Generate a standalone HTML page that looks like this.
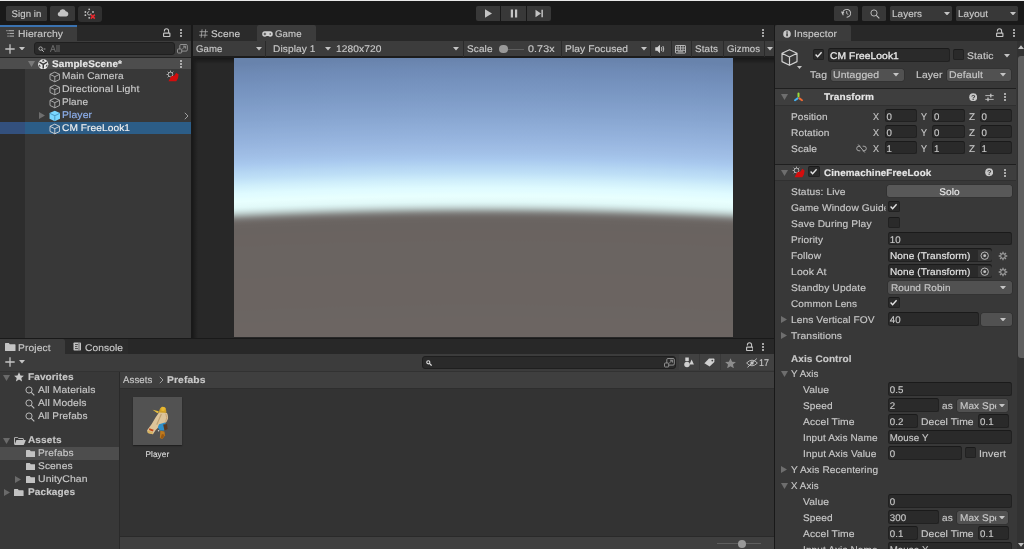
<!DOCTYPE html>
<html><head><meta charset="utf-8"><title>Unity</title>
<style>
html,body{margin:0;padding:0;background:#191919;}
body{width:1024px;height:549px;position:relative;overflow:hidden;font-family:"Liberation Sans",sans-serif;font-size:10px;color:#c8c8c8;}
.r{position:absolute;display:block;}
.t{position:absolute;display:block;height:14px;line-height:14px;white-space:nowrap;font-size:9.7px;letter-spacing:0.1px;color:#c8c8c8;text-rendering:geometricPrecision;-webkit-text-stroke:0.15px currentColor;}
.b{font-weight:bold;}
.w{color:#e6e6e6;}
.btn{border-radius:1.5px;}
#root{position:absolute;left:0;top:0;width:1024px;height:549px;will-change:transform;}
</style></head><body><div id="root">

<div class="r " style="left:0px;top:0px;width:1024px;height:1px;background:#e9e9e9;"></div>
<div class="r " style="left:0px;top:1px;width:1024px;height:24px;background:#191919;"></div>
<div class="r btn" style="left:6px;top:6px;width:41px;height:14.5px;background:#383838;"></div>
<span id="t1" class="t " style="left:6px;width:41px;text-align:center;transform:scaleX(0.9926);transform-origin:50% 50%;top:7.9px;">Sign in</span>
<div class="r btn" style="left:50.2px;top:6px;width:24.6px;height:14.5px;background:#383838;"></div>
<svg class="r" style="left:56.5px;top:9px;" width="12" height="8" viewBox="0 0 12 8"><path d="M2.8 7.6A2.4 2.4 0 0 1 2.5 2.9A3.3 3.3 0 0 1 8.8 2.3A2.7 2.7 0 0 1 9.4 7.6Z" fill="#c4c4c4"/></svg>
<div class="r " style="left:78px;top:6px;width:24px;height:16px;background:#303030;border-radius:3px;"></div>
<svg class="r" style="left:84px;top:8px;" width="13" height="12" viewBox="0 0 13 12"><g fill="#c4c4c4"><circle cx="5.2" cy="1.3" r="0.9"/><circle cx="1.4" cy="4" r="0.9"/><circle cx="9" cy="4" r="0.9"/><circle cx="1.4" cy="7.2" r="0.9"/><circle cx="5.2" cy="9.8" r="0.9"/></g><path d="M5.2 3.6A1.7 1.7 0 1 0 6.9 5.4" fill="none" stroke="#c4c4c4" stroke-width="0.9"/><path d="M6.8 6.6L10.8 10.6M10.8 6.6L6.8 10.6" stroke="#e8292f" stroke-width="1.5"/></svg>
<div class="r " style="left:475.5px;top:6px;width:24.5px;height:14.5px;background:#383838;border-radius:2px 0 0 2px;"></div>
<div class="r " style="left:501px;top:6px;width:24.5px;height:14.5px;background:#383838;border-radius:0;"></div>
<div class="r " style="left:526.5px;top:6px;width:24.5px;height:14.5px;background:#383838;border-radius:0 2px 2px 0;"></div>
<svg class="r" style="left:483.5px;top:9px;" width="9" height="9" viewBox="0 0 9 9"><path d="M1 0.3V8.7L8 4.5Z" fill="#c4c4c4"/></svg>
<svg class="r" style="left:509.5px;top:9px;" width="8" height="9" viewBox="0 0 8 9"><path d="M0.8 0.5H3V8.5H0.8ZM5 0.5H7.2V8.5H5Z" fill="#c4c4c4"/></svg>
<svg class="r" style="left:534.5px;top:9px;" width="9" height="9" viewBox="0 0 9 9"><path d="M0.5 0.8V8.2L6 4.5ZM6.4 0.8H7.9V8.2H6.4Z" fill="#c4c4c4"/></svg>
<div class="r btn" style="left:834px;top:6px;width:24px;height:14.5px;background:#383838;"></div>
<svg class="r" style="left:840.5px;top:8px;" width="11" height="11" viewBox="0 0 11 11"><circle cx="5.7" cy="5.3" r="3.9" fill="none" stroke="#c4c4c4" stroke-width="1" stroke-dasharray="20 4.5" transform="rotate(150 5.7 5.3)"/><path d="M5.7 3V5.5L7.3 6.5" fill="none" stroke="#c4c4c4" stroke-width="0.9"/><path d="M0 3.6L3.4 4L1.4 6.8Z" fill="#c4c4c4"/></svg>
<div class="r btn" style="left:862px;top:6px;width:24px;height:14.5px;background:#383838;"></div>
<svg class="r" style="left:869.5px;top:8.5px;" width="10" height="10" viewBox="0 0 10 10"><circle cx="4" cy="4" r="3.1" fill="none" stroke="#c4c4c4" stroke-width="0.9"/><path d="M6.3 6.3L9.3 9.3" stroke="#c4c4c4" stroke-width="1.1"/></svg>
<div class="r btn" style="left:889.7px;top:6px;width:62.3px;height:14.5px;background:#383838;"></div>
<span id="t2" class="t " style="left:891.5px;transform:scaleX(1.0143);transform-origin:0 50%;top:7.9px;">Layers</span>
<svg class="r" style="left:943.7px;top:11.55px;" width="6" height="3.5" viewBox="0 0 6 3.5"><path d="M0 0H6L3.0 3.5Z" fill="#c4c4c4"/></svg>
<div class="r btn" style="left:955.7px;top:6px;width:62.3px;height:14.5px;background:#383838;"></div>
<span id="t3" class="t " style="left:958.2px;transform:scaleX(1.0137);transform-origin:0 50%;top:7.9px;">Layout</span>
<svg class="r" style="left:1009.7px;top:11.55px;" width="6" height="3.5" viewBox="0 0 6 3.5"><path d="M0 0H6L3.0 3.5Z" fill="#c4c4c4"/></svg>
<div class="r " style="left:0px;top:25px;width:191px;height:16px;background:#282828;"></div>
<div class="r " style="left:0px;top:25px;width:77px;height:16px;background:#3c3c3c;"></div>
<div class="r " style="left:0px;top:24.8px;width:77px;height:2.1px;background:#3a72b0;"></div>
<svg class="r" style="left:6px;top:29.5px;" width="9" height="7" viewBox="0 0 9 7"><g fill="#b4b4b4"><rect x="0.3" y="0.2" width="1.3" height="1"/><rect x="2.4" y="0.2" width="5.6" height="1"/><rect x="1.4" y="2.9" width="1.3" height="1"/><rect x="3.4" y="2.9" width="4.6" height="1"/><rect x="1.4" y="5.6" width="1.3" height="1"/><rect x="3.4" y="5.6" width="4.6" height="1"/></g></svg>
<span id="t4" class="t " style="left:17.7px;transform:scaleX(1.0650);transform-origin:0 50%;top:28.1px;">Hierarchy</span>
<svg class="r" style="left:163px;top:27.8px;" width="7.6" height="9.4" viewBox="0 0 7.6 9.4"><path d="M1.4 3.4V2.9A2.1 2.1 0 0 1 5.6 2.9V5" fill="none" stroke="#c4c4c4" stroke-width="1.1"/><rect x="0.6" y="5.1" width="6.3" height="3.5" rx="0.5" fill="none" stroke="#c4c4c4" stroke-width="1.15"/></svg>
<svg class="r" style="left:179.5px;top:28px;" width="2" height="10" viewBox="0 0 2 10"><rect x="0.1" y="1.1" width="1.8" height="1.8" fill="#c4c4c4"/><rect x="0.1" y="4.1" width="1.8" height="1.8" fill="#c4c4c4"/><rect x="0.1" y="7.1" width="1.8" height="1.8" fill="#c4c4c4"/></svg>
<div class="r " style="left:0px;top:41px;width:191px;height:16px;background:#3c3c3c;"></div>
<div class="r " style="left:0px;top:56.5px;width:191px;height:1px;background:#232323;"></div>
<svg class="r" style="left:5px;top:43.5px;" width="10" height="10" viewBox="0 0 10 10"><path d="M5 0.3V9.7M0.3 5H9.7" stroke="#c4c4c4" stroke-width="1.3"/></svg>
<svg class="r" style="left:18.5px;top:46.85px;" width="6" height="3.5" viewBox="0 0 6 3.5"><path d="M0 0H6L3.0 3.5Z" fill="#c4c4c4"/></svg>
<div class="r " style="left:34.3px;top:42.2px;width:141.2px;height:12.6px;background:#2a2a2a;border:1px solid #1f1f1f;border-radius:3px;box-sizing:border-box;"></div>
<svg class="r" style="left:38px;top:45.5px;" width="8" height="7" viewBox="0 0 8 7"><circle cx="2.6" cy="2.6" r="1.7" fill="none" stroke="#bdbdbd" stroke-width="0.9"/><path d="M3.8 3.8L5.8 5.8" stroke="#bdbdbd" stroke-width="1"/><path d="M5.6 3H7.4" stroke="#bdbdbd" stroke-width="0.8"/></svg>
<span id="t5" class="t " style="left:49.5px;transform:scaleX(0.9107);transform-origin:0 50%;top:43.4px;color:#6e6e6e;">All</span>
<svg class="r" style="left:176.5px;top:43.5px;" width="11" height="10" viewBox="0 0 11 10"><rect x="2.8" y="0.5" width="7.5" height="6.6" rx="1.2" fill="none" stroke="#9a9a9a" stroke-width="0.9"/><rect x="0.5" y="5" width="4.2" height="4" rx="0.8" fill="#3c3c3c" stroke="#9a9a9a" stroke-width="0.9"/><path d="M5.3 5L8.3 2.3M6 2.2H8.4V4.6" fill="none" stroke="#9a9a9a" stroke-width="0.9"/></svg>
<div class="r " style="left:0px;top:57.5px;width:191px;height:280.5px;background:#383838;"></div>
<div class="r " style="left:0px;top:57.5px;width:25.2px;height:280.5px;background:#2d2d2d;"></div>
<div class="r " style="left:0px;top:57.5px;width:191px;height:11.7px;background:#4d4d4d;"></div>
<svg class="r" style="left:28px;top:60.5px;" width="7" height="6" viewBox="0 0 7 6"><path d="M0 0H7L3.5 6Z" fill="#7a7a7a"/></svg>
<svg class="r" style="left:38px;top:58.5px;" width="10.5" height="10.5" viewBox="0 0 10.5 10.5"><circle cx="5.25" cy="5.25" r="5.1" fill="#e8e8e8"/><path d="M5.25 5.4V9.6M5.25 5.4L1.5 3.2M5.25 5.4L9 3.2" stroke="#3a3a3a" stroke-width="1.5" fill="none"/><path d="M5.25 0.6L6.8 2.6H3.7ZM0.9 7.6L1.4 5.2L3 7.6ZM9.6 7.6L9.1 5.2L7.5 7.6Z" fill="#3a3a3a"/></svg>
<span id="t6" class="t b w" style="left:51.7px;transform:scaleX(1.0312);transform-origin:0 50%;top:57.7px;">SampleScene*</span>
<svg class="r" style="left:179.5px;top:58.5px;" width="2" height="10" viewBox="0 0 2 10"><rect x="0.1" y="1.1" width="1.8" height="1.8" fill="#c4c4c4"/><rect x="0.1" y="4.1" width="1.8" height="1.8" fill="#c4c4c4"/><rect x="0.1" y="7.1" width="1.8" height="1.8" fill="#c4c4c4"/></svg>
<div class="r " style="left:0px;top:121.5px;width:191px;height:12.8px;background:#2c5d87;"></div>
<div class="r " style="left:0px;top:121.5px;width:25.2px;height:12.8px;background:#33507d;"></div>
<svg class="r" style="left:48.5px;top:70.8px;" width="11.6" height="11.8" viewBox="-0.2 -0.3 10.4 10.6"><path d="M5 0.7L9.3 2.7V7.3L5 9.4L0.7 7.3V2.7Z M0.7 2.7L5 4.8L9.3 2.7 M5 4.8V9.4" fill="none" stroke="#b4b4b4" stroke-width="0.8" stroke-linejoin="round"/></svg>
<span id="t7" class="t " style="left:62.0px;transform:scaleX(1.0396);transform-origin:0 50%;top:70.0px;color:#c8c8c8;">Main Camera</span>
<svg class="r" style="left:48.5px;top:83.8px;" width="11.6" height="11.8" viewBox="-0.2 -0.3 10.4 10.6"><path d="M5 0.7L9.3 2.7V7.3L5 9.4L0.7 7.3V2.7Z M0.7 2.7L5 4.8L9.3 2.7 M5 4.8V9.4" fill="none" stroke="#b4b4b4" stroke-width="0.8" stroke-linejoin="round"/></svg>
<span id="t8" class="t " style="left:62.0px;transform:scaleX(1.0905);transform-origin:0 50%;top:83.0px;color:#c8c8c8;">Directional Light</span>
<svg class="r" style="left:48.5px;top:96.8px;" width="11.6" height="11.8" viewBox="-0.2 -0.3 10.4 10.6"><path d="M5 0.7L9.3 2.7V7.3L5 9.4L0.7 7.3V2.7Z M0.7 2.7L5 4.8L9.3 2.7 M5 4.8V9.4" fill="none" stroke="#b4b4b4" stroke-width="0.8" stroke-linejoin="round"/></svg>
<span id="t9" class="t " style="left:62.0px;transform:scaleX(1.0325);transform-origin:0 50%;top:96.0px;color:#c8c8c8;">Plane</span>
<svg class="r" style="left:48.5px;top:109.8px;" width="11.6" height="11.8" viewBox="-0.2 -0.3 10.4 10.6"><path d="M5 0.3L9.7 2.5V7.5L5 9.8L0.3 7.5V2.5Z" fill="#7ad8ff"/><path d="M0.6 2.7L5 4.9L9.4 2.7M5 4.9V9.6" fill="none" stroke="#4a9bc6" stroke-width="0.9"/></svg>
<span id="t10" class="t " style="left:62.0px;transform:scaleX(1.0726);transform-origin:0 50%;top:109.0px;color:#8fb2f0;">Player</span>
<svg class="r" style="left:48.5px;top:122.8px;" width="11.6" height="11.8" viewBox="-0.2 -0.3 10.4 10.6"><path d="M5 0.7L9.3 2.7V7.3L5 9.4L0.7 7.3V2.7Z M0.7 2.7L5 4.8L9.3 2.7 M5 4.8V9.4" fill="none" stroke="#dcdcdc" stroke-width="0.8" stroke-linejoin="round"/></svg>
<span id="t11" class="t " style="left:62.0px;transform:scaleX(1.0433);transform-origin:0 50%;top:122.0px;color:#eeeeee;">CM FreeLook1</span>
<svg class="r" style="left:39.1px;top:111.9px;" width="6" height="7" viewBox="0 0 6 7"><path d="M0 0V7L6 3.5Z" fill="#6e6e6e"/></svg>
<svg class="r" style="left:166px;top:70px;" width="13" height="12" viewBox="0 0 13 12"><g fill="none" stroke="#b8b8b8" stroke-width="0.9"><circle cx="4.5" cy="4.5" r="2.3"/><path d="M4.5 0.6V2.2M0.6 4.5H2.2M1.7 1.7L2.9 2.9M7.3 1.7L6.1 2.9M1.7 7.3L2.9 6.1"/></g><path d="M2.5 11.3L5.2 6.3L8.5 5.6L10.2 2.8L12.6 4.6L12 8.2L10.3 11.3Z" fill="#d40d0d"/></svg>
<svg class="r" style="left:184px;top:111.5px;" width="5" height="8" viewBox="0 0 5 8"><path d="M0.8 0.8L4 4L0.8 7.2" fill="none" stroke="#a0a0a0" stroke-width="1"/></svg>
<div class="r " style="left:193px;top:25px;width:581px;height:16px;background:#282828;"></div>
<div class="r " style="left:193px;top:25px;width:64px;height:16px;background:#2b2b2b;"></div>
<svg class="r" style="left:199px;top:29px;" width="9" height="9" viewBox="0 0 9 9"><path d="M2.6 0.3V8.7M6.2 0.3V8.7M0.3 2.7H8.7M0.3 6.2H8.7" stroke="#b0b0b0" stroke-width="0.75" transform="skewX(-6) translate(0.5 0)"/></svg>
<span id="t12" class="t " style="left:211.3px;transform:scaleX(1.0406);transform-origin:0 50%;top:28.1px;">Scene</span>
<div class="r " style="left:257px;top:25px;width:59px;height:16px;background:#3c3c3c;border-radius:2px 2px 0 0;"></div>
<svg class="r" style="left:261.5px;top:30.5px;" width="11" height="6" viewBox="0 0 11 6"><path d="M2.9 0.3H8.1A2.7 2.7 0 0 1 8.1 5.7A2.6 2.6 0 0 1 6.3 4.9H4.7A2.6 2.6 0 0 1 2.9 5.7A2.7 2.7 0 0 1 2.9 0.3Z" fill="#d0d0d0"/><path d="M1.6 3H4.2M2.9 1.7V4.3" stroke="#333" stroke-width="0.8"/><circle cx="8.2" cy="3" r="0.8" fill="#333"/></svg>
<span id="t13" class="t " style="left:274.5px;transform:scaleX(0.9928);transform-origin:0 50%;top:28.1px;">Game</span>
<svg class="r" style="left:762px;top:28px;" width="2" height="10" viewBox="0 0 2 10"><rect x="0.1" y="1.1" width="1.8" height="1.8" fill="#c4c4c4"/><rect x="0.1" y="4.1" width="1.8" height="1.8" fill="#c4c4c4"/><rect x="0.1" y="7.1" width="1.8" height="1.8" fill="#c4c4c4"/></svg>
<div class="r " style="left:193px;top:40.5px;width:581px;height:15.7px;background:#3c3c3c;"></div>
<div class="r " style="left:193px;top:56.2px;width:581px;height:1.4px;background:#1c1c1c;"></div>
<span id="t14" class="t " style="left:195.7px;transform:scaleX(0.9854);transform-origin:0 50%;top:43.3px;">Game</span>
<svg class="r" style="left:255.5px;top:47.05px;" width="6" height="3.5" viewBox="0 0 6 3.5"><path d="M0 0H6L3.0 3.5Z" fill="#c4c4c4"/></svg>
<div class="r " style="left:265px;top:41px;width:1px;height:16px;background:#2a2a2a;"></div>
<span id="t15" class="t " style="left:272.5px;transform:scaleX(1.0457);transform-origin:0 50%;top:43.3px;">Display 1</span>
<svg class="r" style="left:324.5px;top:47.05px;" width="6" height="3.5" viewBox="0 0 6 3.5"><path d="M0 0H6L3.0 3.5Z" fill="#c4c4c4"/></svg>
<span id="t16" class="t " style="left:336.0px;transform:scaleX(1.0517);transform-origin:0 50%;top:43.3px;">1280x720</span>
<svg class="r" style="left:452.5px;top:47.05px;" width="6" height="3.5" viewBox="0 0 6 3.5"><path d="M0 0H6L3.0 3.5Z" fill="#c4c4c4"/></svg>
<div class="r " style="left:462.5px;top:41px;width:1px;height:16px;background:#2a2a2a;"></div>
<span id="t17" class="t " style="left:467.0px;transform:scaleX(1.0352);transform-origin:0 50%;top:43.3px;">Scale</span>
<div class="r " style="left:503px;top:48.5px;width:20.5px;height:1px;background:#5e5e5e;"></div>
<div class="r " style="left:499.3px;top:44.6px;width:8.4px;height:8.4px;background:#999999;border-radius:50%;"></div>
<span id="t18" class="t " style="left:528.0px;transform:scaleX(1.0994);transform-origin:0 50%;top:43.3px;">0.73x</span>
<div class="r " style="left:561px;top:41px;width:1px;height:16px;background:#2a2a2a;"></div>
<span id="t19" class="t " style="left:564.5px;transform:scaleX(1.0535);transform-origin:0 50%;top:43.3px;">Play Focused</span>
<svg class="r" style="left:640.5px;top:47.05px;" width="6" height="3.5" viewBox="0 0 6 3.5"><path d="M0 0H6L3.0 3.5Z" fill="#c4c4c4"/></svg>
<div class="r " style="left:649.5px;top:41px;width:1px;height:16px;background:#2a2a2a;"></div>
<svg class="r" style="left:654.5px;top:44px;" width="11" height="10" viewBox="0 0 11 10"><path d="M0.3 3.3H2.3L5 0.8V9.2L2.3 6.7H0.3Z" fill="#d0d0d0"/><path d="M6.4 3.2Q7.4 5 6.4 6.8M7.9 2Q9.6 5 7.9 8" fill="none" stroke="#d0d0d0" stroke-width="0.9"/></svg>
<div class="r " style="left:670.5px;top:41px;width:1px;height:16px;background:#2a2a2a;"></div>
<svg class="r" style="left:675px;top:44.5px;" width="11" height="9" viewBox="0 0 11 9"><rect x="0.5" y="0.5" width="10" height="7.6" rx="0.6" fill="none" stroke="#c4c4c4" stroke-width="0.9"/><path d="M1 3H10M1 5.4H10M3 0.8V5.4M5.5 0.8V5.4M8 0.8V5.4" stroke="#c4c4c4" stroke-width="0.8" fill="none"/><path d="M2.8 6.8H8.2" stroke="#c4c4c4" stroke-width="0.9"/></svg>
<div class="r " style="left:690.5px;top:41px;width:1px;height:16px;background:#2a2a2a;"></div>
<span id="t20" class="t " style="left:695.0px;transform:scaleX(1.0232);transform-origin:0 50%;top:43.3px;">Stats</span>
<div class="r " style="left:723px;top:41px;width:1px;height:16px;background:#2a2a2a;"></div>
<span id="t21" class="t " style="left:726.5px;transform:scaleX(0.9897);transform-origin:0 50%;top:43.3px;">Gizmos</span>
<div class="r " style="left:763.5px;top:41px;width:1px;height:16px;background:#2a2a2a;"></div>
<svg class="r" style="left:767px;top:47.05px;" width="6" height="3.5" viewBox="0 0 6 3.5"><path d="M0 0H6L3.0 3.5Z" fill="#c4c4c4"/></svg>
<div class="r " style="left:193px;top:57.5px;width:581px;height:280.5px;background:#282828;background:linear-gradient(to right,rgba(27,27,27,1) 0,rgba(27,27,27,0) 5px),linear-gradient(to bottom,rgba(24,24,24,1) 0,rgba(24,24,24,0) 6px),#282828;"></div>
<div class="r" id="sky" style="left:234.3px;top:57.5px;width:498.8px;height:279.5px;background:radial-gradient(circle at 249px 5319.8px,#6c6562 5037.8px,#6c6562 5039.8px,#6c6562 5041.8px,#6c6562 5043.8px,#6c6562 5045.8px,#6c6562 5047.8px,#6c6562 5049.8px,#6c6562 5051.8px,#6c6562 5053.8px,#6c6562 5055.8px,#6c6562 5057.8px,#6c6562 5059.8px,#6b6562 5061.8px,#6b6562 5063.8px,#6b6562 5065.8px,#6b6562 5067.8px,#6b6562 5069.8px,#6b6562 5071.8px,#6b6461 5073.8px,#6b6461 5075.8px,#6b6461 5077.8px,#6b6461 5079.8px,#6b6461 5081.8px,#6b6461 5083.8px,#6b6461 5085.8px,#6b6461 5087.8px,#6b6461 5089.8px,#6b6461 5091.8px,#6b6461 5093.8px,#6b6461 5095.8px,#6b6461 5097.8px,#6b6461 5099.8px,#6b6461 5101.8px,#6b6461 5103.8px,#6a6461 5105.8px,#6a6461 5107.8px,#6a6461 5109.8px,#6a6461 5111.8px,#6a6461 5113.8px,#6a6461 5115.8px,#6a6461 5117.8px,#6a6461 5119.8px,#6a6461 5121.8px,#6a6461 5123.8px,#6a6461 5125.8px,#6a6461 5127.8px,#6a6461 5129.8px,#6a6461 5131.8px,#6a6461 5133.8px,#6a6461 5135.8px,#6a6360 5137.8px,#6a6360 5139.8px,#6a6360 5141.8px,#6a6360 5143.8px,#6a6360 5145.8px,#6a6360 5146.8px,#6a6360 5147.8px,#696360 5148.8px,#696360 5149.8px,#696360 5150.8px,#696360 5151.8px,#696360 5152.8px,#696360 5153.8px,#696360 5154.8px,#6a6461 5155.8px,#6a6461 5156.8px,#6a6461 5157.8px,#6b6663 5158.8px,#6d6764 5159.8px,#6f6a67 5160.8px,#726e6c 5161.8px,#777472 5162.8px,#7d7c7a 5163.8px,#858684 5164.8px,#8f9290 5165.8px,#99a09e 5166.8px,#a4aeac 5167.8px,#afbbba 5168.8px,#b9c9c7 5169.8px,#c3d4d3 5170.8px,#cbdedd 5171.8px,#d2e7e6 5172.8px,#d7eeed 5173.8px,#dcf3f2 5174.8px,#e0f8f7 5175.8px,#e2faf9 5176.8px,#e4fbfa 5177.8px,#e5fcfb 5178.8px,#e6fdfc 5179.8px,#e7fefd 5180.8px,#e8fffe 5181.8px,#e7fffe 5182.8px,#e6fefe 5183.8px,#e5fefe 5184.8px,#e3fdff 5185.8px,#e2fcff 5186.8px,#e1fcff 5187.8px,#e0fbff 5188.8px,#dffbff 5189.8px,#ddf9fe 5190.8px,#dbf8fe 5191.8px,#d9f6fd 5192.8px,#d7f4fd 5193.8px,#d5f3fc 5194.8px,#d3f1fc 5195.8px,#d1f0fb 5196.8px,#cfeefb 5197.8px,#cdecfa 5198.8px,#caeafa 5199.8px,#c6e6f9 5201.8px,#c1e2f7 5203.8px,#bddef6 5205.8px,#badbf5 5207.8px,#b7d8f4 5209.8px,#b4d5f2 5211.8px,#b0d1f1 5213.8px,#adcef0 5215.8px,#aacaef 5217.8px,#a7c7ed 5219.8px,#a5c5eb 5221.8px,#a3c2e9 5223.8px,#a1c0e7 5225.8px,#a0bee6 5227.8px,#9ebce4 5229.8px,#9dbbe3 5231.8px,#9bb9e2 5233.8px,#99b7e1 5235.8px,#98b6df 5237.8px,#96b4de 5239.8px,#95b3dd 5241.8px,#93b1dc 5243.8px,#92b0da 5245.8px,#91afd9 5247.8px,#8fadd8 5249.8px,#8eacd7 5251.8px,#8dabd5 5253.8px,#8ba9d4 5255.8px,#8aa8d3 5257.8px,#89a7d2 5259.8px,#87a5d0 5261.8px,#86a4cf 5263.8px,#85a3ce 5265.8px,#84a2cd 5267.8px,#83a1cc 5269.8px,#829fcb 5271.8px,#819eca 5273.8px,#809dc9 5275.8px,#7e9cc7 5277.8px,#7d9bc6 5279.8px,#7c9ac5 5281.8px,#7b99c4 5283.8px,#7a97c3 5285.8px,#7996c2 5287.8px,#7895c1 5289.8px,#7794c0 5291.8px,#7693bf 5293.8px,#7592be 5295.8px,#7491bd 5297.8px,#7390bb 5299.8px,#728eba 5301.8px,#718db9 5303.8px,#708cb8 5305.8px,#6f8bb7 5307.8px,#6e8ab5 5309.8px,#6d89b3 5311.8px,#6c87b1 5313.8px,#6b86b0 5315.8px,#6984ae 5317.8px,#6883ac 5319.8px,#6883ac 5321.8px,#6883ac 5323.8px,#6883ac 5325.8px,#6883ac 5327.8px);"></div>
<div class="r " style="left:775.3px;top:25px;width:248.70000000000005px;height:16px;background:#282828;"></div>
<div class="r " style="left:775.3px;top:25px;width:75.7px;height:16px;background:#3c3c3c;border-radius:2px 2px 0 0;"></div>
<svg class="r" style="left:782.5px;top:29.5px;" width="8" height="8" viewBox="0 0 8 8"><circle cx="4" cy="4" r="3.8" fill="#c8c8c8"/><rect x="3.3" y="3.3" width="1.5" height="3" fill="#333"/><rect x="3.3" y="1.4" width="1.5" height="1.3" fill="#333"/></svg>
<span id="t22" class="t " style="left:794.0px;transform:scaleX(1.0576);transform-origin:0 50%;top:28.1px;">Inspector</span>
<svg class="r" style="left:996.3px;top:27.8px;" width="7.6" height="9.4" viewBox="0 0 7.6 9.4"><path d="M1.4 3.4V2.9A2.1 2.1 0 0 1 5.6 2.9V5" fill="none" stroke="#c4c4c4" stroke-width="1.1"/><rect x="0.6" y="5.1" width="6.3" height="3.5" rx="0.5" fill="none" stroke="#c4c4c4" stroke-width="1.15"/></svg>
<svg class="r" style="left:1013px;top:28px;" width="2" height="10" viewBox="0 0 2 10"><rect x="0.1" y="1.1" width="1.8" height="1.8" fill="#c4c4c4"/><rect x="0.1" y="4.1" width="1.8" height="1.8" fill="#c4c4c4"/><rect x="0.1" y="7.1" width="1.8" height="1.8" fill="#c4c4c4"/></svg>
<div class="r " style="left:775.3px;top:41px;width:248.70000000000005px;height:508px;background:#383838;"></div>
<div class="r " style="left:1016.5px;top:41px;width:7.5px;height:508px;background:#323232;"></div>
<div class="r " style="left:1017.9px;top:55.5px;width:6.1px;height:302px;background:#5f5f5f;border-radius:3px 0 0 3px;"></div>
<svg class="r" style="left:1017.5px;top:45px;" width="6" height="4" viewBox="0 0 6 4"><path d="M0 4H6L3 0.3Z" fill="#c0c0c0"/></svg>
<svg class="r" style="left:1017.5px;top:543px;" width="6" height="4" viewBox="0 0 6 4"><path d="M0 0H6L3 3.7Z" fill="#c0c0c0"/></svg>
<svg class="r" style="left:781px;top:49px;" width="17.5" height="17.5" viewBox="0 0 17.5 17.5"><path d="M8.5 0.8L16 4.3V12.6L8.5 16.3L1 12.6V4.3Z M1 4.3L8.5 8L16 4.3 M8.5 8V16.3" fill="none" stroke="#d0d0d0" stroke-width="1.2" stroke-linejoin="round"/></svg>
<svg class="r" style="left:797px;top:66.0px;" width="5" height="3" viewBox="0 0 5 3"><path d="M0 0H5L2.5 3Z" fill="#c4c4c4"/></svg>
<div class="r " style="left:812.5px;top:49.2px;width:11.3px;height:11.3px;background:#2a2a2a;border:1px solid #212121;border-top-color:#1a1a1a;border-radius:2px;box-sizing:border-box;"></div>
<svg class="r" style="left:812.5px;top:49.2px;" width="11.3" height="11.3" viewBox="0 0 11.3 11.3"><path d="M2.6 5.6L4.6 7.7L8.6 3.2" fill="none" stroke="#e4e4e4" stroke-width="1.4"/></svg>
<div class="r " style="left:827.6px;top:48.2px;width:122.4px;height:13.4px;background:#2a2a2a;border:1px solid #212121;border-top-color:#1a1a1a;border-radius:2.5px;box-sizing:border-box;"></div>
<span id="t23" class="t w" style="left:830.3px;transform:scaleX(1.0556);transform-origin:0 50%;top:50.0px;-webkit-text-stroke:0.3px #e6e6e6;">CM FreeLook1</span>
<div class="r " style="left:952.7px;top:49.2px;width:11.3px;height:11.3px;background:#2a2a2a;border:1px solid #212121;border-top-color:#1a1a1a;border-radius:2px;box-sizing:border-box;"></div>
<span id="t24" class="t " style="left:966.5px;transform:scaleX(1.0714);transform-origin:0 50%;top:50.0px;">Static</span>
<svg class="r" style="left:1004px;top:54.05px;" width="6" height="3.5" viewBox="0 0 6 3.5"><path d="M0 0H6L3.0 3.5Z" fill="#c4c4c4"/></svg>
<span id="t25" class="t " style="left:809.5px;transform:scaleX(1.0742);transform-origin:0 50%;top:69.0px;">Tag</span>
<div class="r " style="left:830.8px;top:68.5px;width:73.2px;height:12.3px;background:#515151;border-radius:2.5px;box-shadow:0 0 0 0.6px #2e2e2e;"></div>
<span id="t26" class="t " style="left:833.3px;transform:scaleX(1.0769);transform-origin:0 50%;top:69.2px;">Untagged</span>
<svg class="r" style="left:892.5px;top:73.2px;" width="6" height="3.5" viewBox="0 0 6 3.5"><path d="M0 0H6L3.0 3.5Z" fill="#c4c4c4"/></svg>
<span id="t27" class="t " style="left:915.5px;transform:scaleX(1.0757);transform-origin:0 50%;top:69.0px;">Layer</span>
<div class="r " style="left:946.6px;top:68.5px;width:64.8px;height:12.3px;background:#515151;border-radius:2.5px;box-shadow:0 0 0 0.6px #2e2e2e;"></div>
<span id="t28" class="t " style="left:949.1px;transform:scaleX(1.0862);transform-origin:0 50%;top:69.2px;">Default</span>
<svg class="r" style="left:999.9px;top:73.2px;" width="6" height="3.5" viewBox="0 0 6 3.5"><path d="M0 0H6L3.0 3.5Z" fill="#c4c4c4"/></svg>
<div class="r " style="left:775.3px;top:88px;width:241.2px;height:1px;background:#1f1f1f;"></div>
<div class="r " style="left:775.3px;top:89px;width:241.2px;height:15.5px;background:#3e3e3e;"></div>
<div class="r " style="left:775.3px;top:104.5px;width:241.2px;height:0.6px;background:#303030;"></div>
<svg class="r" style="left:780.5px;top:94px;" width="7" height="6" viewBox="0 0 7 6"><path d="M0 0H7L3.5 6Z" fill="#6e6e6e"/></svg>
<svg class="r" style="left:793px;top:91.5px;" width="11" height="11" viewBox="0 0 11 11"><g stroke-linecap="round" stroke-width="2"><path d="M5.5 4.6V1.6" stroke="#9bdc3c"/><path d="M4.6 6.4L2 8.2" stroke="#45b0f0"/><path d="M6.4 6.4L9 8.2" stroke="#ee6a34"/></g></svg>
<span id="t29" class="t b w" style="left:824.1px;transform:scaleX(1.0379);transform-origin:0 50%;top:91.2px;">Transform</span>
<svg class="r" style="left:969px;top:92.8px;" width="8.4" height="8.4" viewBox="0 0 8.4 8.4"><circle cx="4.2" cy="4.2" r="4" fill="#c8c8c8"/><text x="4.2" y="6.9" font-size="7.5" font-weight="bold" text-anchor="middle" fill="#3a3a3a" font-family="Liberation Sans, sans-serif">?</text></svg>
<svg class="r" style="left:984.8px;top:92.5px;" width="9" height="9" viewBox="0 0 9 9"><path d="M0.3 2.6H8.7M0.3 6.4H8.7" stroke="#c4c4c4" stroke-width="0.9"/><path d="M5.8 0.8V4.4M3 4.6V8.2" stroke="#c4c4c4" stroke-width="1.3"/></svg>
<svg class="r" style="left:1004.2px;top:92px;" width="2" height="10" viewBox="0 0 2 10"><rect x="0.1" y="1.1" width="1.8" height="1.8" fill="#c4c4c4"/><rect x="0.1" y="4.1" width="1.8" height="1.8" fill="#c4c4c4"/><rect x="0.1" y="7.1" width="1.8" height="1.8" fill="#c4c4c4"/></svg>
<span id="t30" class="t " style="left:790.6px;transform:scaleX(1.0378);transform-origin:0 50%;top:110.6px;">Position</span>
<span id="t31" class="t " style="left:873.4px;transform:scaleX(0.9275);transform-origin:0 50%;top:110.6px;">X</span>
<div class="r " style="left:884.9px;top:108.7px;width:32.1px;height:13.6px;background:#2a2a2a;border:1px solid #212121;border-top-color:#1a1a1a;border-radius:2.5px;box-sizing:border-box;"></div>
<span id="t32" class="t " style="left:886.6px;top:110.6px;">0</span>
<span id="t33" class="t " style="left:921.1px;transform:scaleX(0.9275);transform-origin:0 50%;top:110.6px;">Y</span>
<div class="r " style="left:932.4px;top:108.7px;width:32.6px;height:13.6px;background:#2a2a2a;border:1px solid #212121;border-top-color:#1a1a1a;border-radius:2.5px;box-sizing:border-box;"></div>
<span id="t34" class="t " style="left:934.1px;top:110.6px;">0</span>
<span id="t35" class="t " style="left:968.5px;transform:scaleX(1.0132);transform-origin:0 50%;top:110.6px;">Z</span>
<div class="r " style="left:979.8000000000001px;top:108.7px;width:32.1px;height:13.6px;background:#2a2a2a;border:1px solid #212121;border-top-color:#1a1a1a;border-radius:2.5px;box-sizing:border-box;"></div>
<span id="t36" class="t " style="left:981.5px;top:110.6px;">0</span>
<span id="t37" class="t " style="left:790.6px;transform:scaleX(1.0464);transform-origin:0 50%;top:126.6px;">Rotation</span>
<span id="t38" class="t " style="left:873.4px;transform:scaleX(0.9275);transform-origin:0 50%;top:126.6px;">X</span>
<div class="r " style="left:884.9px;top:124.7px;width:32.1px;height:13.6px;background:#2a2a2a;border:1px solid #212121;border-top-color:#1a1a1a;border-radius:2.5px;box-sizing:border-box;"></div>
<span id="t39" class="t " style="left:886.6px;top:126.6px;">0</span>
<span id="t40" class="t " style="left:921.1px;transform:scaleX(0.9275);transform-origin:0 50%;top:126.6px;">Y</span>
<div class="r " style="left:932.4px;top:124.7px;width:32.6px;height:13.6px;background:#2a2a2a;border:1px solid #212121;border-top-color:#1a1a1a;border-radius:2.5px;box-sizing:border-box;"></div>
<span id="t41" class="t " style="left:934.1px;top:126.6px;">0</span>
<span id="t42" class="t " style="left:968.5px;transform:scaleX(1.0132);transform-origin:0 50%;top:126.6px;">Z</span>
<div class="r " style="left:979.8000000000001px;top:124.7px;width:32.1px;height:13.6px;background:#2a2a2a;border:1px solid #212121;border-top-color:#1a1a1a;border-radius:2.5px;box-sizing:border-box;"></div>
<span id="t43" class="t " style="left:981.5px;top:126.6px;">0</span>
<span id="t44" class="t " style="left:790.6px;transform:scaleX(1.0555);transform-origin:0 50%;top:142.6px;">Scale</span>
<span id="t45" class="t " style="left:873.4px;transform:scaleX(0.9275);transform-origin:0 50%;top:142.6px;">X</span>
<div class="r " style="left:884.9px;top:140.7px;width:32.1px;height:13.6px;background:#2a2a2a;border:1px solid #212121;border-top-color:#1a1a1a;border-radius:2.5px;box-sizing:border-box;"></div>
<span id="t46" class="t " style="left:886.6px;top:142.6px;">1</span>
<span id="t47" class="t " style="left:921.1px;transform:scaleX(0.9275);transform-origin:0 50%;top:142.6px;">Y</span>
<div class="r " style="left:932.4px;top:140.7px;width:32.6px;height:13.6px;background:#2a2a2a;border:1px solid #212121;border-top-color:#1a1a1a;border-radius:2.5px;box-sizing:border-box;"></div>
<span id="t48" class="t " style="left:934.1px;top:142.6px;">1</span>
<span id="t49" class="t " style="left:968.5px;transform:scaleX(1.0132);transform-origin:0 50%;top:142.6px;">Z</span>
<div class="r " style="left:979.8000000000001px;top:140.7px;width:32.1px;height:13.6px;background:#2a2a2a;border:1px solid #212121;border-top-color:#1a1a1a;border-radius:2.5px;box-sizing:border-box;"></div>
<span id="t50" class="t " style="left:981.5px;top:142.6px;">1</span>
<svg class="r" style="left:855.5px;top:143.5px;" width="11" height="9" viewBox="0 0 11 9"><path d="M4.3 2.2H3A2.3 2.3 0 0 0 3 6.8H4.3M6.7 2.2H8A2.3 2.3 0 0 1 8 6.8H6.7" fill="none" stroke="#b0b0b0" stroke-width="0.9"/><path d="M2.2 0.5L8.8 8.5" stroke="#b0b0b0" stroke-width="0.9"/></svg>
<div class="r " style="left:775.3px;top:163.5px;width:241.2px;height:1px;background:#1f1f1f;"></div>
<div class="r " style="left:775.3px;top:164.5px;width:241.2px;height:15.5px;background:#3e3e3e;"></div>
<div class="r " style="left:775.3px;top:180px;width:241.2px;height:0.6px;background:#303030;"></div>
<svg class="r" style="left:780.5px;top:169.5px;" width="7" height="6" viewBox="0 0 7 6"><path d="M0 0H7L3.5 6Z" fill="#6e6e6e"/></svg>
<svg class="r" style="left:792px;top:166.3px;" width="13" height="12" viewBox="0 0 13 12"><g fill="none" stroke="#b8b8b8" stroke-width="0.9"><circle cx="4.5" cy="4.5" r="2.3"/><path d="M4.5 0.6V2.2M0.6 4.5H2.2M1.7 1.7L2.9 2.9M7.3 1.7L6.1 2.9M1.7 7.3L2.9 6.1"/></g><path d="M2.5 11.3L5.2 6.3L8.5 5.6L10.2 2.8L12.6 4.6L12 8.2L10.3 11.3Z" fill="#d40d0d"/></svg>
<div class="r " style="left:808.3px;top:166.2px;width:11.3px;height:11.3px;background:#2a2a2a;border:1px solid #212121;border-top-color:#1a1a1a;border-radius:2px;box-sizing:border-box;"></div>
<svg class="r" style="left:808.3px;top:166.2px;" width="11.3" height="11.3" viewBox="0 0 11.3 11.3"><path d="M2.6 5.6L4.6 7.7L8.6 3.2" fill="none" stroke="#e4e4e4" stroke-width="1.4"/></svg>
<span id="t51" class="t b w" style="left:823.5px;transform:scaleX(1.0151);transform-origin:0 50%;top:166.7px;">CinemachineFreeLook</span>
<svg class="r" style="left:984.8px;top:168.3px;" width="8.4" height="8.4" viewBox="0 0 8.4 8.4"><circle cx="4.2" cy="4.2" r="4" fill="#c8c8c8"/><text x="4.2" y="6.9" font-size="7.5" font-weight="bold" text-anchor="middle" fill="#3a3a3a" font-family="Liberation Sans, sans-serif">?</text></svg>
<svg class="r" style="left:1004.2px;top:167.5px;" width="2" height="10" viewBox="0 0 2 10"><rect x="0.1" y="1.1" width="1.8" height="1.8" fill="#c4c4c4"/><rect x="0.1" y="4.1" width="1.8" height="1.8" fill="#c4c4c4"/><rect x="0.1" y="7.1" width="1.8" height="1.8" fill="#c4c4c4"/></svg>
<span id="t52" class="t " style="left:791.1px;transform:scaleX(1.0536);transform-origin:0 50%;top:185.7px;">Status: Live</span>
<div class="r " style="left:886.9px;top:185px;width:125px;height:12.2px;background:#585858;border-radius:2.5px;box-shadow:0 0 0 0.6px #2e2e2e;"></div>
<span id="t53" class="t w" style="left:886.9px;width:125px;text-align:center;transform:scaleX(1.0411);transform-origin:50% 50%;top:185.5px;">Solo</span>
<span id="t54" class="t " style="left:790.6px;transform:scaleX(1.0495);transform-origin:0 50%;width:90.05px;overflow:hidden;top:201.7px;">Game Window Guides</span>
<div class="r " style="left:888.4px;top:201.0px;width:11.3px;height:11.3px;background:#2a2a2a;border:1px solid #212121;border-top-color:#1a1a1a;border-radius:2px;box-sizing:border-box;"></div>
<svg class="r" style="left:888.4px;top:201.0px;" width="11.3" height="11.3" viewBox="0 0 11.3 11.3"><path d="M2.6 5.6L4.6 7.7L8.6 3.2" fill="none" stroke="#e4e4e4" stroke-width="1.4"/></svg>
<span id="t55" class="t " style="left:790.6px;transform:scaleX(1.0542);transform-origin:0 50%;top:217.7px;">Save During Play</span>
<div class="r " style="left:888.4px;top:217.0px;width:11.3px;height:11.3px;background:#2a2a2a;border:1px solid #212121;border-top-color:#1a1a1a;border-radius:2px;box-sizing:border-box;"></div>
<span id="t56" class="t " style="left:790.6px;transform:scaleX(1.0371);transform-origin:0 50%;top:233.7px;">Priority</span>
<div class="r " style="left:888.0px;top:232.0px;width:123.9px;height:13.4px;background:#2a2a2a;border:1px solid #212121;border-top-color:#1a1a1a;border-radius:2.5px;box-sizing:border-box;"></div>
<span id="t57" class="t " style="left:889.7px;top:233.8px;">10</span>
<span id="t58" class="t " style="left:790.6px;transform:scaleX(1.0526);transform-origin:0 50%;top:249.7px;">Follow</span>
<div class="r " style="left:888.0px;top:248.0px;width:104.4px;height:13.6px;background:#2a2a2a;border:1px solid #212121;border-top-color:#1a1a1a;border-radius:2.5px;box-sizing:border-box;"></div>
<span id="t59" class="t w" style="left:890.0px;transform:scaleX(1.0362);transform-origin:0 50%;top:250.0px;">None (Transform)</span>
<div class="r " style="left:977.5px;top:249.8px;width:14px;height:11.2px;background:#373737;border-radius:0 2px 2px 0;"></div>
<svg class="r" style="left:979.5px;top:250.9px;" width="9.5" height="9.5" viewBox="0 0 9.5 9.5"><circle cx="4.7" cy="4.7" r="3.7" fill="none" stroke="#c4c4c4" stroke-width="0.9"/><circle cx="4.7" cy="4.7" r="1.4" fill="#c4c4c4"/></svg>
<svg class="r" style="left:998px;top:250.7px;" width="10" height="10" viewBox="0 0 10 10"><g fill="none" stroke="#9a9a9a"><circle cx="5" cy="5" r="2.3" stroke-width="1.2"/><path d="M5 0.7V2M5 8V9.3M0.7 5H2M8 5H9.3M2 2L2.9 2.9M7.1 7.1L8 8M2 8L2.9 7.1M7.1 2.9L8 2" stroke-width="1.3"/></g></svg>
<span id="t60" class="t " style="left:790.6px;transform:scaleX(1.0781);transform-origin:0 50%;top:265.7px;">Look At</span>
<div class="r " style="left:888.0px;top:264.0px;width:104.4px;height:13.6px;background:#2a2a2a;border:1px solid #212121;border-top-color:#1a1a1a;border-radius:2.5px;box-sizing:border-box;"></div>
<span id="t61" class="t w" style="left:890.0px;transform:scaleX(1.0362);transform-origin:0 50%;top:266.0px;">None (Transform)</span>
<div class="r " style="left:977.5px;top:265.8px;width:14px;height:11.2px;background:#373737;border-radius:0 2px 2px 0;"></div>
<svg class="r" style="left:979.5px;top:266.9px;" width="9.5" height="9.5" viewBox="0 0 9.5 9.5"><circle cx="4.7" cy="4.7" r="3.7" fill="none" stroke="#c4c4c4" stroke-width="0.9"/><circle cx="4.7" cy="4.7" r="1.4" fill="#c4c4c4"/></svg>
<svg class="r" style="left:998px;top:266.7px;" width="10" height="10" viewBox="0 0 10 10"><g fill="none" stroke="#9a9a9a"><circle cx="5" cy="5" r="2.3" stroke-width="1.2"/><path d="M5 0.7V2M5 8V9.3M0.7 5H2M8 5H9.3M2 2L2.9 2.9M7.1 7.1L8 8M2 8L2.9 7.1M7.1 2.9L8 2" stroke-width="1.3"/></g></svg>
<span id="t62" class="t " style="left:790.6px;transform:scaleX(1.0596);transform-origin:0 50%;top:281.7px;">Standby Update</span>
<div class="r " style="left:888.4px;top:281px;width:123.5px;height:12.6px;background:#515151;border-radius:2.5px;box-shadow:0 0 0 0.6px #2e2e2e;"></div>
<span id="t63" class="t " style="left:890.9px;transform:scaleX(1.0337);transform-origin:0 50%;top:281.8px;">Round Robin</span>
<svg class="r" style="left:1000.4px;top:285.85px;" width="6" height="3.5" viewBox="0 0 6 3.5"><path d="M0 0H6L3.0 3.5Z" fill="#c4c4c4"/></svg>
<span id="t64" class="t " style="left:790.6px;transform:scaleX(1.0312);transform-origin:0 50%;top:297.7px;">Common Lens</span>
<div class="r " style="left:888.4px;top:297.0px;width:11.3px;height:11.3px;background:#2a2a2a;border:1px solid #212121;border-top-color:#1a1a1a;border-radius:2px;box-sizing:border-box;"></div>
<svg class="r" style="left:888.4px;top:297.0px;" width="11.3" height="11.3" viewBox="0 0 11.3 11.3"><path d="M2.6 5.6L4.6 7.7L8.6 3.2" fill="none" stroke="#e4e4e4" stroke-width="1.4"/></svg>
<svg class="r" style="left:781px;top:316.0px;" width="6" height="7" viewBox="0 0 6 7"><path d="M0 0V7L6 3.5Z" fill="#6e6e6e"/></svg>
<span id="t65" class="t " style="left:790.6px;transform:scaleX(1.0480);transform-origin:0 50%;top:313.7px;">Lens Vertical FOV</span>
<div class="r " style="left:888.0px;top:312.0px;width:90.7px;height:13.6px;background:#2a2a2a;border:1px solid #212121;border-top-color:#1a1a1a;border-radius:2.5px;box-sizing:border-box;"></div>
<span id="t66" class="t " style="left:889.7px;top:313.9px;">40</span>
<div class="r " style="left:981.3px;top:313px;width:30.6px;height:12.8px;background:#515151;border-radius:2.5px;box-shadow:0 0 0 0.6px #2e2e2e;"></div>
<svg class="r" style="left:1000.4px;top:317.95px;" width="6" height="3.5" viewBox="0 0 6 3.5"><path d="M0 0H6L3.0 3.5Z" fill="#c4c4c4"/></svg>
<svg class="r" style="left:781px;top:332.0px;" width="6" height="7" viewBox="0 0 6 7"><path d="M0 0V7L6 3.5Z" fill="#6e6e6e"/></svg>
<span id="t67" class="t " style="left:790.6px;transform:scaleX(1.0618);transform-origin:0 50%;top:329.7px;">Transitions</span>
<span id="t68" class="t b" style="left:790.6px;transform:scaleX(1.0308);transform-origin:0 50%;top:353.2px;">Axis Control</span>
<svg class="r" style="left:780.5px;top:370.5px;" width="7" height="6" viewBox="0 0 7 6"><path d="M0 0H7L3.5 6Z" fill="#6e6e6e"/></svg>
<span id="t69" class="t " style="left:790.6px;transform:scaleX(1.0092);transform-origin:0 50%;top:367.7px;">Y Axis</span>
<span id="t70" class="t " style="left:802.7px;transform:scaleX(1.0629);transform-origin:0 50%;top:383.7px;">Value</span>
<div class="r " style="left:888.0px;top:382.0px;width:123.9px;height:13.6px;background:#2a2a2a;border:1px solid #212121;border-top-color:#1a1a1a;border-radius:2.5px;box-sizing:border-box;"></div>
<span id="t71" class="t " style="left:889.7px;top:383.9px;">0.5</span>
<span id="t72" class="t " style="left:802.7px;transform:scaleX(1.0381);transform-origin:0 50%;top:399.7px;">Speed</span>
<div class="r " style="left:888.0px;top:398.0px;width:51.4px;height:13.6px;background:#2a2a2a;border:1px solid #212121;border-top-color:#1a1a1a;border-radius:2.5px;box-sizing:border-box;"></div>
<span id="t73" class="t " style="left:889.7px;top:399.9px;">2</span>
<span id="t74" class="t " style="left:942.0px;transform:scaleX(1.0354);transform-origin:0 50%;top:399.7px;">as</span>
<div class="r " style="left:957.3px;top:399.1px;width:50.5px;height:12.6px;background:#515151;border-radius:2.5px;box-shadow:0 0 0 0.6px #2e2e2e;"></div>
<span id="t75" class="t " style="left:959.8px;transform:scaleX(1.0338);transform-origin:0 50%;width:34.82px;overflow:hidden;top:399.9px;">Max Speed</span>
<svg class="r" style="left:998.6px;top:403.95000000000005px;" width="6" height="3.5" viewBox="0 0 6 3.5"><path d="M0 0H6L3.0 3.5Z" fill="#c4c4c4"/></svg>
<span id="t76" class="t " style="left:802.7px;transform:scaleX(1.0668);transform-origin:0 50%;top:415.7px;">Accel Time</span>
<div class="r " style="left:888.0px;top:414.0px;width:30.0px;height:13.6px;background:#2a2a2a;border:1px solid #212121;border-top-color:#1a1a1a;border-radius:2.5px;box-sizing:border-box;"></div>
<span id="t77" class="t " style="left:889.7px;top:415.9px;">0.2</span>
<span id="t78" class="t " style="left:920.5px;transform:scaleX(1.0658);transform-origin:0 50%;top:415.7px;">Decel Time</span>
<div class="r " style="left:978.3000000000001px;top:414.0px;width:30.5px;height:13.6px;background:#2a2a2a;border:1px solid #212121;border-top-color:#1a1a1a;border-radius:2.5px;box-sizing:border-box;"></div>
<span id="t79" class="t " style="left:980.0px;top:415.9px;">0.1</span>
<span id="t80" class="t " style="left:802.7px;transform:scaleX(1.0355);transform-origin:0 50%;top:431.7px;">Input Axis Name</span>
<div class="r " style="left:888.0px;top:430.0px;width:123.9px;height:13.6px;background:#2a2a2a;border:1px solid #212121;border-top-color:#1a1a1a;border-radius:2.5px;box-sizing:border-box;"></div>
<span id="t81" class="t " style="left:889.7px;top:431.9px;">Mouse Y</span>
<span id="t82" class="t " style="left:802.7px;transform:scaleX(1.0460);transform-origin:0 50%;top:447.7px;">Input Axis Value</span>
<div class="r " style="left:888.0px;top:446.0px;width:74.4px;height:13.6px;background:#2a2a2a;border:1px solid #212121;border-top-color:#1a1a1a;border-radius:2.5px;box-sizing:border-box;"></div>
<span id="t83" class="t " style="left:889.7px;top:447.9px;">0</span>
<div class="r " style="left:965px;top:447.09999999999997px;width:11.3px;height:11.3px;background:#2a2a2a;border:1px solid #212121;border-top-color:#1a1a1a;border-radius:2px;box-sizing:border-box;"></div>
<span id="t84" class="t " style="left:978.5px;transform:scaleX(1.0916);transform-origin:0 50%;top:447.7px;">Invert</span>
<svg class="r" style="left:781px;top:466.0px;" width="6" height="7" viewBox="0 0 6 7"><path d="M0 0V7L6 3.5Z" fill="#6e6e6e"/></svg>
<span id="t85" class="t " style="left:790.6px;transform:scaleX(1.0435);transform-origin:0 50%;top:463.7px;">Y Axis Recentering</span>
<svg class="r" style="left:780.5px;top:482.5px;" width="7" height="6" viewBox="0 0 7 6"><path d="M0 0H7L3.5 6Z" fill="#6e6e6e"/></svg>
<span id="t86" class="t " style="left:790.6px;transform:scaleX(1.0028);transform-origin:0 50%;top:479.7px;">X Axis</span>
<span id="t87" class="t " style="left:802.7px;transform:scaleX(1.0629);transform-origin:0 50%;top:495.7px;">Value</span>
<div class="r " style="left:888.0px;top:494.0px;width:123.9px;height:13.6px;background:#2a2a2a;border:1px solid #212121;border-top-color:#1a1a1a;border-radius:2.5px;box-sizing:border-box;"></div>
<span id="t88" class="t " style="left:889.7px;top:495.9px;">0</span>
<span id="t89" class="t " style="left:802.7px;transform:scaleX(1.0381);transform-origin:0 50%;top:511.7px;">Speed</span>
<div class="r " style="left:888.0px;top:510.0px;width:51.4px;height:13.6px;background:#2a2a2a;border:1px solid #212121;border-top-color:#1a1a1a;border-radius:2.5px;box-sizing:border-box;"></div>
<span id="t90" class="t " style="left:889.7px;top:511.9px;">300</span>
<span id="t91" class="t " style="left:942.0px;transform:scaleX(1.0354);transform-origin:0 50%;top:511.7px;">as</span>
<div class="r " style="left:957.3px;top:511.1px;width:50.5px;height:12.6px;background:#515151;border-radius:2.5px;box-shadow:0 0 0 0.6px #2e2e2e;"></div>
<span id="t92" class="t " style="left:959.8px;transform:scaleX(1.0338);transform-origin:0 50%;width:34.82px;overflow:hidden;top:511.9px;">Max Speed</span>
<svg class="r" style="left:998.6px;top:515.9499999999999px;" width="6" height="3.5" viewBox="0 0 6 3.5"><path d="M0 0H6L3.0 3.5Z" fill="#c4c4c4"/></svg>
<span id="t93" class="t " style="left:802.7px;transform:scaleX(1.0668);transform-origin:0 50%;top:527.7px;">Accel Time</span>
<div class="r " style="left:888.0px;top:526.0px;width:30.0px;height:13.6px;background:#2a2a2a;border:1px solid #212121;border-top-color:#1a1a1a;border-radius:2.5px;box-sizing:border-box;"></div>
<span id="t94" class="t " style="left:889.7px;top:527.9px;">0.1</span>
<span id="t95" class="t " style="left:920.5px;transform:scaleX(1.0658);transform-origin:0 50%;top:527.7px;">Decel Time</span>
<div class="r " style="left:978.3000000000001px;top:526.0px;width:30.5px;height:13.6px;background:#2a2a2a;border:1px solid #212121;border-top-color:#1a1a1a;border-radius:2.5px;box-sizing:border-box;"></div>
<span id="t96" class="t " style="left:980.0px;top:527.9px;">0.1</span>
<span id="t97" class="t " style="left:802.7px;transform:scaleX(1.0355);transform-origin:0 50%;top:543.7px;">Input Axis Name</span>
<div class="r " style="left:888.0px;top:542.0px;width:123.9px;height:13.6px;background:#2a2a2a;border:1px solid #212121;border-top-color:#1a1a1a;border-radius:2.5px;box-sizing:border-box;"></div>
<span id="t98" class="t " style="left:889.7px;top:543.9px;">Mouse X</span>
<div class="r " style="left:0px;top:339px;width:774px;height:15px;background:#282828;"></div>
<div class="r " style="left:64.8px;top:339px;width:63px;height:15px;background:#2b2b2b;"></div>
<div class="r " style="left:0px;top:339px;width:64.8px;height:15px;background:#3c3c3c;border-radius:0 2px 0 0;"></div>
<svg class="r" style="left:5px;top:343.0px;" width="10.5" height="8" viewBox="0 0 10.5 8"><path d="M0 0.6Q0 0 0.6 0H3.8L4.8 1.2H9.9Q10.5 1.2 10.5 1.8V7.5Q10.5 8 9.9 8H0.6Q0 8 0 7.5Z" fill="#c4c4c4"/></svg>
<span id="t99" class="t " style="left:17.9px;transform:scaleX(1.0600);transform-origin:0 50%;top:342.2px;">Project</span>
<svg class="r" style="left:72.7px;top:342px;" width="8.5" height="9.4" viewBox="0 0 8.5 9.4"><rect x="0.5" y="0.5" width="7.5" height="8" rx="0.8" fill="#c4c4c4"/><path d="M2 2.6H5M2 4.6H4.4M2 6.6H5" stroke="#3a3a3a" stroke-width="0.9"/><path d="M6 0.5V8.5" stroke="#3a3a3a" stroke-width="0.7"/></svg>
<span id="t100" class="t " style="left:84.5px;transform:scaleX(1.0513);transform-origin:0 50%;top:342.2px;">Console</span>
<svg class="r" style="left:745.8px;top:341.7px;" width="7.6" height="9.4" viewBox="0 0 7.6 9.4"><path d="M1.4 3.4V2.9A2.1 2.1 0 0 1 5.6 2.9V5" fill="none" stroke="#c4c4c4" stroke-width="1.1"/><rect x="0.6" y="5.1" width="6.3" height="3.5" rx="0.5" fill="none" stroke="#c4c4c4" stroke-width="1.15"/></svg>
<svg class="r" style="left:762px;top:342px;" width="2" height="10" viewBox="0 0 2 10"><rect x="0.1" y="1.1" width="1.8" height="1.8" fill="#c4c4c4"/><rect x="0.1" y="4.1" width="1.8" height="1.8" fill="#c4c4c4"/><rect x="0.1" y="7.1" width="1.8" height="1.8" fill="#c4c4c4"/></svg>
<div class="r " style="left:0px;top:354px;width:774px;height:17.2px;background:#3c3c3c;"></div>
<div class="r " style="left:0px;top:370.5px;width:774px;height:0.9px;background:#323232;"></div>
<svg class="r" style="left:5px;top:357.1px;" width="10" height="10" viewBox="0 0 10 10"><path d="M5 0.3V9.7M0.3 5H9.7" stroke="#c4c4c4" stroke-width="1.3"/></svg>
<svg class="r" style="left:18.7px;top:360.45px;" width="6" height="3.5" viewBox="0 0 6 3.5"><path d="M0 0H6L3.0 3.5Z" fill="#c4c4c4"/></svg>
<div class="r " style="left:422.3px;top:356px;width:254px;height:13px;background:#2a2a2a;border:1px solid #1f1f1f;border-radius:3px;box-sizing:border-box;"></div>
<svg class="r" style="left:425.5px;top:360px;" width="6" height="6" viewBox="0 0 6 6"><circle cx="2.3" cy="2.3" r="1.55" fill="none" stroke="#dcdcdc" stroke-width="1.15"/><path d="M3.4 3.4L5.6 5.6" stroke="#dcdcdc" stroke-width="1.3"/></svg>
<svg class="r" style="left:664px;top:357.5px;" width="11" height="10" viewBox="0 0 11 10"><rect x="2.8" y="0.5" width="7.5" height="6.6" rx="1.2" fill="none" stroke="#9a9a9a" stroke-width="0.9"/><rect x="0.5" y="5" width="4.2" height="4" rx="0.8" fill="#2a2a2a" stroke="#9a9a9a" stroke-width="0.9"/><path d="M5.3 5L8.3 2.3M6 2.2H8.4V4.6" fill="none" stroke="#9a9a9a" stroke-width="0.9"/></svg>
<div class="r " style="left:679px;top:354px;width:95px;height:16.4px;background:#383838;"></div>
<div class="r " style="left:679px;top:354px;width:20.299999999999955px;height:16.4px;background:#414141;"></div>
<div class="r " style="left:700px;top:354px;width:20px;height:16.4px;background:#414141;"></div>
<div class="r " style="left:720.7px;top:354px;width:19.899999999999977px;height:16.4px;background:#414141;"></div>
<div class="r " style="left:741.3px;top:354px;width:32.700000000000045px;height:16.4px;background:#414141;"></div>
<svg class="r" style="left:684px;top:356.5px;" width="11" height="11" viewBox="0 0 11 11"><rect x="1.3" y="0.5" width="3.5" height="3.6" fill="#d0d0d0"/><circle cx="3" cy="7.6" r="2.75" fill="#d0d0d0"/><path d="M5.4 7.6L7.6 2.6L9.9 7.6Z" fill="#d0d0d0"/></svg>
<svg class="r" style="left:704.3px;top:358px;" width="11" height="9" viewBox="0 0 11 9"><path d="M0.4 5.2L5 0.6H9.8Q10.4 0.6 10.4 1.2V4L5.6 8.6Z" fill="#d0d0d0"/><circle cx="8.3" cy="2.6" r="0.9" fill="#414141"/></svg>
<svg class="r" style="left:724.7px;top:357.5px;" width="11" height="10.5" viewBox="0 0 11 10.5"><path d="M5.5 0.3L7.1 3.8L10.9 4.1L8 6.6L8.9 10.3L5.5 8.3L2.1 10.3L3 6.6L0.1 4.1L3.9 3.8Z" fill="#8c8c8c"/></svg>
<svg class="r" style="left:745.8px;top:357.5px;" width="12.5" height="10" viewBox="0 0 12.5 10"><path d="M0.6 5Q6 -0.6 11.4 5Q6 10.6 0.6 5Z" fill="none" stroke="#c4c4c4" stroke-width="0.9"/><circle cx="6" cy="5" r="1.7" fill="#c4c4c4"/><path d="M1.5 9.3L10.8 0.6" stroke="#c4c4c4" stroke-width="1"/></svg>
<span id="t101" class="t " style="left:758.7px;transform:scaleX(0.9190);transform-origin:0 50%;top:357.0px;">17</span>
<div class="r " style="left:0px;top:371.9px;width:119px;height:178px;background:#383838;"></div>
<div class="r " style="left:119px;top:371.9px;width:1px;height:178px;background:#2a2a2a;"></div>
<svg class="r" style="left:3.3px;top:374.5px;" width="7" height="6" viewBox="0 0 7 6"><path d="M0 0H7L3.5 6Z" fill="#6a6a6a"/></svg>
<svg class="r" style="left:13.9px;top:372.3px;" width="10" height="9.5" viewBox="0 0 10 9.5"><path d="M5 0.2L6.5 3.4L9.9 3.7L7.3 6L8.1 9.4L5 7.6L1.9 9.4L2.7 6L0.1 3.7L3.5 3.4Z" fill="#c8c8c8"/></svg>
<span id="t102" class="t b" style="left:27.5px;transform:scaleX(1.0370);transform-origin:0 50%;top:371.4px;">Favorites</span>
<svg class="r" style="left:24.8px;top:385.8px;" width="10" height="10" viewBox="0 0 10 10"><circle cx="4" cy="4" r="3.1" fill="none" stroke="#c4c4c4" stroke-width="0.9"/><path d="M6.3 6.3L9.3 9.3" stroke="#c4c4c4" stroke-width="1.1"/></svg>
<span id="t103" class="t " style="left:38.3px;transform:scaleX(1.0636);transform-origin:0 50%;top:384.2px;">All Materials</span>
<svg class="r" style="left:24.8px;top:398.7px;" width="10" height="10" viewBox="0 0 10 10"><circle cx="4" cy="4" r="3.1" fill="none" stroke="#c4c4c4" stroke-width="0.9"/><path d="M6.3 6.3L9.3 9.3" stroke="#c4c4c4" stroke-width="1.1"/></svg>
<span id="t104" class="t " style="left:38.3px;transform:scaleX(1.0639);transform-origin:0 50%;top:397.1px;">All Models</span>
<svg class="r" style="left:24.8px;top:411.5px;" width="10" height="10" viewBox="0 0 10 10"><circle cx="4" cy="4" r="3.1" fill="none" stroke="#c4c4c4" stroke-width="0.9"/><path d="M6.3 6.3L9.3 9.3" stroke="#c4c4c4" stroke-width="1.1"/></svg>
<span id="t105" class="t " style="left:38.3px;transform:scaleX(1.0346);transform-origin:0 50%;top:409.9px;">All Prefabs</span>
<svg class="r" style="left:3.3px;top:437.5px;" width="7" height="6" viewBox="0 0 7 6"><path d="M0 0H7L3.5 6Z" fill="#6a6a6a"/></svg>
<svg class="r" style="left:14px;top:436.5px;" width="12" height="8" viewBox="0 0 12 8"><path d="M0.5 7.5V0.8Q0.5 0.4 1 0.4H3.6L4.6 1.5H9Q9.4 1.5 9.4 2V3" fill="none" stroke="#c2c2c2" stroke-width="0.9"/><path d="M2.4 3H11.4Q11.9 3 11.7 3.5L10 7.6Q9.9 8 9.4 8H0.6Z" fill="#c2c2c2"/></svg>
<span id="t106" class="t b" style="left:27.5px;transform:scaleX(1.0378);transform-origin:0 50%;top:434.2px;">Assets</span>
<div class="r " style="left:0px;top:447.3px;width:119px;height:12.8px;background:#4d4d4d;"></div>
<svg class="r" style="left:25.7px;top:449.90000000000003px;" width="9.6" height="7.4" viewBox="0 0 9.6 7.4"><path d="M0 0.6Q0 0 0.6 0H3.8L4.8 1.2H9.0Q9.6 1.2 9.6 1.8V6.9Q9.6 7.4 9.0 7.4H0.6Q0 7.4 0 6.9Z" fill="#c2c2c2"/></svg>
<span id="t107" class="t " style="left:38.3px;transform:scaleX(1.0444);transform-origin:0 50%;top:447.1px;">Prefabs</span>
<svg class="r" style="left:25.7px;top:462.90000000000003px;" width="9.6" height="7.4" viewBox="0 0 9.6 7.4"><path d="M0 0.6Q0 0 0.6 0H3.8L4.8 1.2H9.0Q9.6 1.2 9.6 1.8V6.9Q9.6 7.4 9.0 7.4H0.6Q0 7.4 0 6.9Z" fill="#c2c2c2"/></svg>
<span id="t108" class="t " style="left:38.3px;transform:scaleX(1.0514);transform-origin:0 50%;top:460.1px;">Scenes</span>
<svg class="r" style="left:14.8px;top:475.7px;" width="6" height="7" viewBox="0 0 6 7"><path d="M0 0V7L6 3.5Z" fill="#6a6a6a"/></svg>
<svg class="r" style="left:25.7px;top:475.90000000000003px;" width="9.6" height="7.4" viewBox="0 0 9.6 7.4"><path d="M0 0.6Q0 0 0.6 0H3.8L4.8 1.2H9.0Q9.6 1.2 9.6 1.8V6.9Q9.6 7.4 9.0 7.4H0.6Q0 7.4 0 6.9Z" fill="#c2c2c2"/></svg>
<span id="t109" class="t " style="left:38.3px;transform:scaleX(1.0753);transform-origin:0 50%;top:473.1px;">UnityChan</span>
<svg class="r" style="left:3.8px;top:488.7px;" width="6" height="7" viewBox="0 0 6 7"><path d="M0 0V7L6 3.5Z" fill="#6a6a6a"/></svg>
<svg class="r" style="left:14.4px;top:488.90000000000003px;" width="9.6" height="7.4" viewBox="0 0 9.6 7.4"><path d="M0 0.6Q0 0 0.6 0H3.8L4.8 1.2H9.0Q9.6 1.2 9.6 1.8V6.9Q9.6 7.4 9.0 7.4H0.6Q0 7.4 0 6.9Z" fill="#c2c2c2"/></svg>
<span id="t110" class="t b" style="left:27.5px;transform:scaleX(1.0348);transform-origin:0 50%;top:486.1px;">Packages</span>
<div class="r " style="left:120px;top:371.9px;width:654px;height:16px;background:#3f3f3f;"></div>
<div class="r " style="left:120px;top:387.8px;width:654px;height:0.7px;background:#2e2e2e;"></div>
<span id="t111" class="t " style="left:123.2px;transform:scaleX(0.9906);transform-origin:0 50%;top:374.0px;">Assets</span>
<svg class="r" style="left:158.7px;top:376px;" width="5" height="8" viewBox="0 0 5 8"><path d="M0.8 0.8L4 4L0.8 7.2" fill="none" stroke="#a0a0a0" stroke-width="1"/></svg>
<span id="t112" class="t b" style="left:167.1px;transform:scaleX(1.0623);transform-origin:0 50%;top:374.0px;">Prefabs</span>
<div class="r " style="left:120px;top:388.5px;width:654px;height:147.5px;background:#333333;"></div>
<div class="r " style="left:133.4px;top:397.4px;width:48.7px;height:48.1px;background:#525252;box-shadow:0 0.5px 1.2px #1c1c1c;"></div>
<svg class="r" style="left:128px;top:392px;" width="60" height="70" viewBox="0 0 471 549"><g><path d="M195 140L238 168L252 128Q275 108 297 126L302 162L250 168Z" fill="#cfa02a"/><path d="M193 139L242 150L232 166Z" fill="#e6be3c"/><path d="M262 118Q280 112 292 126L284 150L262 146Z" fill="#e8b830"/><path d="M243 160L306 164Q326 200 300 238L252 262L216 300L196 332L156 322L150 300L186 250L216 200Z" fill="#dcc49a"/><path d="M262 172L226 256" stroke="#bf9f6e" stroke-width="9" fill="none"/><path d="M296 170Q312 200 296 232" stroke="#c8a070" stroke-width="7" fill="none"/><path d="M168 284L202 296L194 310L164 299Z" fill="#c04a18"/><path d="M152 300L196 316L192 332L156 322Z" fill="#d8b460"/><path d="M244 252L290 240L302 262L286 302L250 302L234 276Z" fill="#2f8fc8"/><path d="M276 254L306 250L311 290L286 302Z" fill="#5a3820"/><path d="M254 304L286 310L291 340L270 368L250 360Z" fill="#c07a1c"/><path d="M266 330L288 336L272 366L256 360Z" fill="#9a5a12"/><circle cx="240" cy="304" r="6" fill="#d8d8d0"/></g></svg>
<span id="t113" class="t " style="font-size:8.2px;left:133.4px;width:48.7px;text-align:center;transform:scaleX(1.0034);transform-origin:50% 50%;top:448.2px;color:#d8d8d8;">Player</span>
<div class="r " style="left:120px;top:536px;width:654px;height:13px;background:#404040;"></div>
<div class="r " style="left:120px;top:535.6px;width:654px;height:0.6px;background:#2a2a2a;"></div>
<div class="r " style="left:717px;top:543.2px;width:44px;height:1px;background:#5e5e5e;"></div>
<div class="r " style="left:738px;top:539.6px;width:8.2px;height:8.2px;background:#999999;border-radius:50%;"></div>
</div></body></html>
